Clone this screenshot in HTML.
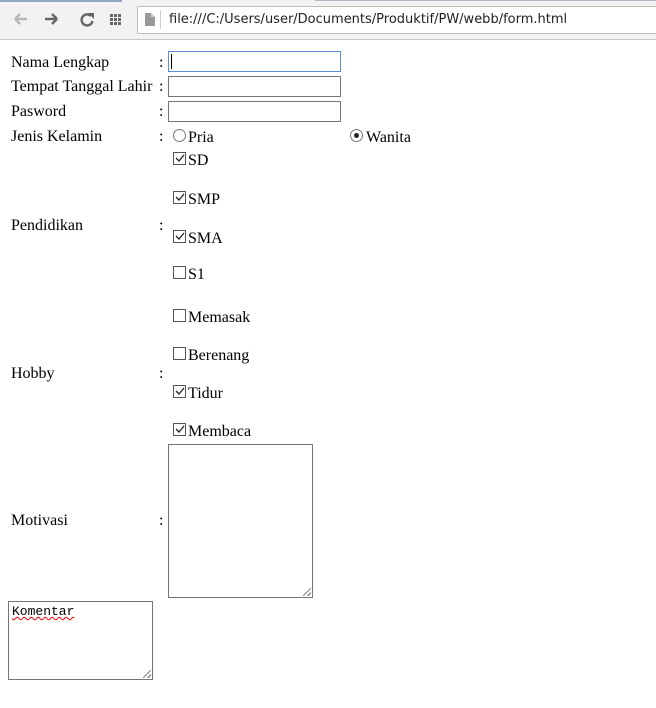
<!DOCTYPE html>
<html><head><style>
body{margin:0;width:656px;height:708px;background:#fff;position:relative;overflow:hidden;font-family:"Liberation Serif",serif;font-size:16px;color:#000}
.a{position:absolute;white-space:nowrap;line-height:18px}
.in{position:absolute;left:168px;width:171px;height:19px;border:1px solid #767676;background:#fff}
.cb{position:absolute;left:173px;width:11px;height:11px;border:1px solid #555;background:#fff}
.rd{position:absolute;width:11px;height:11px;border:1px solid #777;border-radius:50%;background:#fff}
.ta{position:absolute;border:1px solid #767676;background:#fff}
.grip{position:absolute;right:1px;bottom:1px;width:8px;height:8px;background:linear-gradient(135deg,transparent 45%,#888 45%,#888 55%,transparent 55%,transparent 75%,#888 75%,#888 85%,transparent 85%)}
</style></head><body>
<div style="position:absolute;left:0;top:0;width:656px;height:39px;background:#f2f2f2;border-bottom:1px solid #c8c8c8"></div>
<div style="position:absolute;left:0;top:0;width:122px;height:2px;background:#8fa6c6"></div>
<div style="position:absolute;left:315px;top:0;width:341px;height:1px;background:#b0b8c8"></div>
<svg style="position:absolute;left:12px;top:11px" width="110" height="16" viewBox="0 0 110 16">
<path d="M3 8h12M3 8l5-5M3 8l5 5" stroke="#b7b7b7" stroke-width="2.4" fill="none"/>
<path d="M33 8h12M45 8l-5-5M45 8l-5 5" stroke="#666" stroke-width="2.4" fill="none"/>
<path d="M79 5a5.5 5.5 0 1 0 1.5 5" stroke="#666" stroke-width="2.4" fill="none"/><path d="M76 2h6v6z" fill="#666"/>
<g fill="#666"><rect x="98" y="3" width="3" height="3"/><rect x="102" y="3" width="3" height="3"/><rect x="106" y="3" width="3" height="3"/><rect x="98" y="7" width="3" height="3"/><rect x="102" y="7" width="3" height="3"/><rect x="106" y="7" width="3" height="3"/><rect x="98" y="11" width="3" height="3"/><rect x="102" y="11" width="3" height="3"/><rect x="106" y="11" width="3" height="3"/></g>
</svg>
<div style="position:absolute;left:137px;top:6px;width:530px;height:26px;border:1px solid #bdbdbd;background:#fff"></div>
<svg style="position:absolute;left:144px;top:12px" width="12" height="15"><path d="M1 1h6l4 4v9H1z" fill="#999"/><path d="M7 1v4h4" fill="#ccc"/></svg>
<div style="position:absolute;left:160px;top:10px;width:1px;height:19px;background:#ccc"></div>
<div class="a" style="left:169px;top:11px;font-family:'DejaVu Sans',sans-serif;font-size:13px;color:#222">file:///C:/Users/user/Documents/Produktif/PW/webb/form.html</div>

<div class="a" style="left:11px;top:54px">Nama Lengkap</div><div class="a" style="left:159px;top:54px">:</div>
<div class="in" style="top:51px;border-color:#5b8fd9"></div><div style="position:absolute;left:171px;top:54px;width:1px;height:15px;background:#000"></div>
<div class="a" style="left:11px;top:78px">Tempat Tanggal Lahir</div><div class="a" style="left:159px;top:78px">:</div>
<div class="in" style="top:76px"></div>
<div class="a" style="left:11px;top:103px">Pasword</div><div class="a" style="left:159px;top:103px">:</div>
<div class="in" style="top:101px"></div>
<div class="a" style="left:11px;top:128px">Jenis Kelamin</div><div class="a" style="left:159px;top:128px">:</div>
<div class="rd" style="left:173px;top:129px"></div><div class="a" style="left:188px;top:129px">Pria</div>
<div class="rd" style="left:350px;top:129px"></div><div style="position:absolute;left:354px;top:133px;width:5px;height:5px;border-radius:50%;background:#222"></div><div class="a" style="left:366px;top:129px">Wanita</div>

<div class="a" style="left:11px;top:217px">Pendidikan</div><div class="a" style="left:159px;top:217px">:</div>
<div class="a" style="left:11px;top:365px">Hobby</div><div class="a" style="left:159px;top:365px">:</div>
<div class="a" style="left:11px;top:512px">Motivasi</div><div class="a" style="left:159px;top:512px">:</div>

<div class="cb" style="top:152px"></div><div class="a" style="left:188px;top:152px">SD</div>
<div class="cb" style="top:191px"></div><div class="a" style="left:188px;top:191px">SMP</div>
<div class="cb" style="top:230px"></div><div class="a" style="left:188px;top:230px">SMA</div>
<div class="cb" style="top:266px"></div><div class="a" style="left:188px;top:266px">S1</div>
<div class="cb" style="top:309px"></div><div class="a" style="left:188px;top:309px">Memasak</div>
<div class="cb" style="top:347px"></div><div class="a" style="left:188px;top:347px">Berenang</div>
<div class="cb" style="top:385px"></div><div class="a" style="left:188px;top:385px">Tidur</div>
<div class="cb" style="top:423px"></div><div class="a" style="left:188px;top:423px">Membaca</div>
<svg style="position:absolute;left:173px;top:0" width="13" height="440"><g stroke="#222" stroke-width="1.3" fill="none"><path d="M3 158l3 3 5-6"/><path d="M3 197l3 3 5-6"/><path d="M3 236l3 3 5-6"/><path d="M3 391l3 3 5-6"/><path d="M3 429l3 3 5-6"/></g></svg>

<div class="ta" style="left:168px;top:444px;width:143px;height:152px"><div class="grip"></div></div>
<div class="ta" style="left:8px;top:601px;width:143px;height:77px"><div class="grip"></div>
<div style="position:absolute;left:3px;top:2px;font-family:'Liberation Mono',monospace;font-size:13px;line-height:15px;text-decoration:underline wavy #e00;text-decoration-thickness:1px">Komentar</div></div>
</body></html>
